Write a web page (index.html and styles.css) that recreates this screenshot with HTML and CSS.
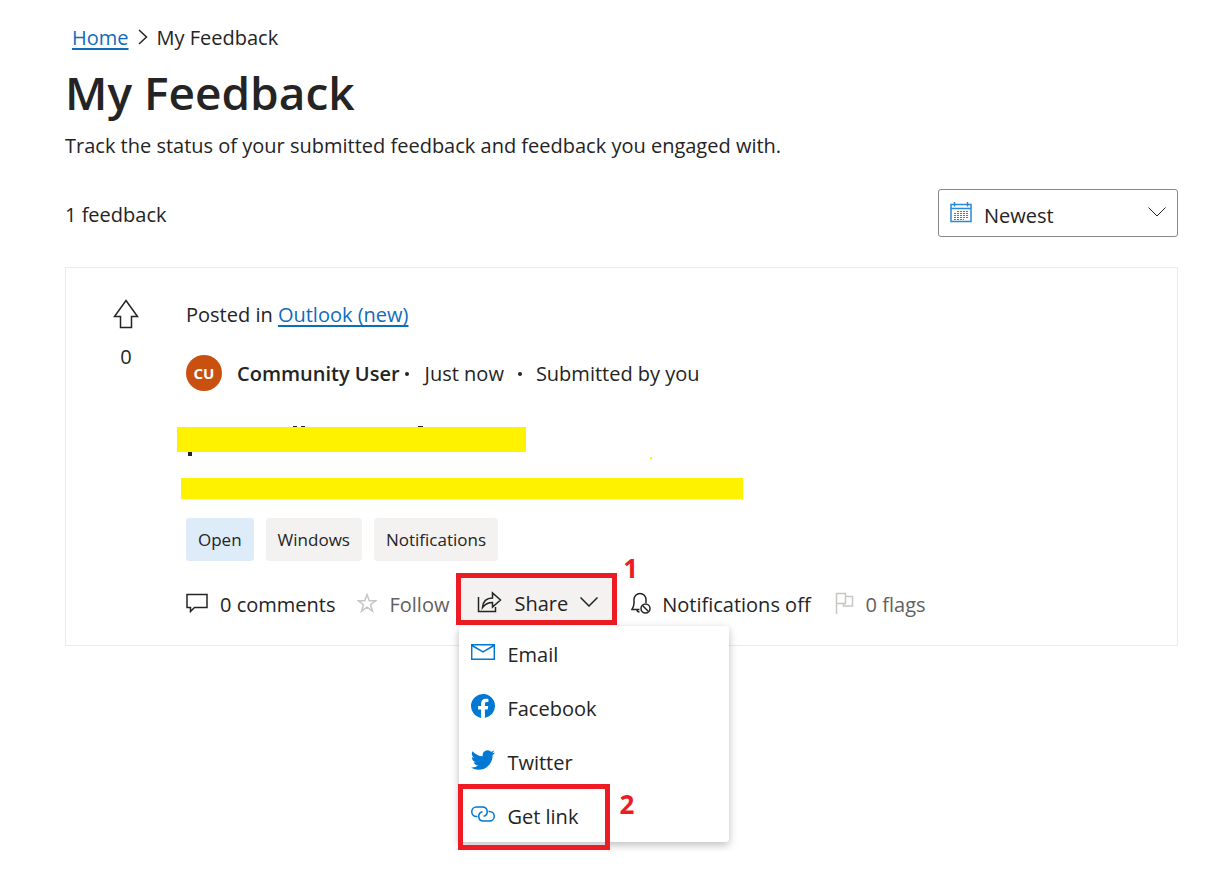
FILE: index.html
```
<!DOCTYPE html>
<html lang="en">
<head>
    <meta charset="UTF-8">
    <meta name="viewport" content="width=device-width, initial-scale=1.0">
    <title>My Feedback</title>
    <link rel="stylesheet" href="styles.css">
</head>
<body>

<main class="page">
    <nav class="breadcrumb" aria-label="Breadcrumb">
        <a href="#">Home</a>
        <svg width="10" height="16" viewBox="0 0 10 16"><path d="M1 1l7.500 7L1 15"/></svg>
        <span>My Feedback</span>
    </nav>

    <h1>My Feedback</h1>
    <p class="intro">Track the status of your submitted feedback and feedback you engaged with.</p>

    <div class="toolbar">
        <span class="count">1 feedback</span>
        <div class="sort">
            <svg class="sort-icon" width="22" height="21" viewBox="0 0 22 21">
                <path d="M1 2.500h20v17H1zM1 6.500h20M4.500 0v4.500M17.500 0v4.500"/>
                <path class="dots" d="M7 9.500h12M4 11.500h15M4 13.500h15M4 15.500h15M4 17.500h10"/>
            </svg>
            <select aria-label="Sort feedback">
                <option>Newest</option>
                <option>Oldest</option>
            </select>
            <svg class="sort-arrow" width="18" height="10" viewBox="0 0 18 10"><path d="M.500.500L9 9l8.500-8.500"/></svg>
        </div>
    </div>

    <article class="card">
        <div class="vote">
            <button class="vote-button" aria-label="Upvote">
                <svg width="26" height="30" viewBox="0 0 26 30"><path d="M13 1.500L24.500 17.500H18.500V28.500H7.500V17.500H1.500z"/></svg>
            </button>
            <span>0</span>
        </div>

        <div class="content">
            <p class="posted">Posted in <a href="#">Outlook (new)</a></p>

            <div class="author">
                <span class="avatar">CU</span>
                <strong>Community User</strong>
                <span class="dot near"></span>
                <span>Just now</span>
                <span class="dot"></span>
                <span>Submitted by you</span>
            </div>

            <!-- title and description are blanked out -->
            <svg class="redacted" width="566" height="76" viewBox="0 0 566 76">
                <path class="ink" d="M116 2h4v2h-4zM124 2h4v2h-4zM241 2h5v2h-5zM11 28h4v4h-4z"/>
                <path class="marker" d="M0 3h349v25H0zM4 54h562v21H4zM473 33h2v2h-2z"/>
            </svg>

            <div class="tags">
                <span class="tag open">Open</span>
                <span class="tag">Windows</span>
                <span class="tag">Notifications</span>
            </div>

            <div class="actions">
                <button class="action comments">
                    <svg width="22" height="20" viewBox="0 0 22 20"><path d="M1 1.500h20v13H8.500L4.500 18.500v-4H1z"/></svg>
                    0 comments
                </button>
                <button class="action muted follow">
                    <svg width="20" height="20" viewBox="0 0 20 20"><path d="M10 1.500l2.200 6.200h6.500l-5.200 4 2 6.500-5.500-4-5.500 4 2-6.500-5.200-4h6.500z"/></svg>
                    Follow
                </button>

                <div class="share">
                    <button class="action share-button" aria-expanded="true">
                        <svg width="25" height="22" viewBox="0 0 25 22">
                            <path d="M1.500 6v14.500h17V16M5.500 16.500C6 10 9.500 7 15.500 7V2l8 7-8 7v-4.500c-4.500 0-7.500 1.500-10 5z"/>
                        </svg>
                        Share
                        <svg width="18" height="10" viewBox="0 0 18 10"><path d="M.500.500L9 9l8.500-8.500"/></svg>
                    </button>
                    <span class="step step-one">1</span>

                    <div class="menu">
                        <a href="#">
                            <svg width="24" height="24" viewBox="0 0 24 24"><path d="M.700 4.700h22.600v14.600H.700zM1 5.500l11 6.500 11-6.500"/></svg>
                            Email
                        </a>
                        <a href="#">
                            <svg class="solid" width="24" height="24" viewBox="0 0 24 24">
                                <path d="M24 12a12 12 0 1 0-13.900 11.900v-8.400H7.100V12h3V9.400c0-3 1.800-4.700 4.600-4.700 1.300 0 2.700.200 2.700.200v3h-1.500c-1.500 0-2 .900-2 1.900V12h3.300l-.500 3.500h-2.800v8.400A12 12 0 0 0 24 12z"/>
                            </svg>
                            Facebook
                        </a>
                        <a href="#">
                            <svg class="solid" width="24" height="24" viewBox="0 0 24 24">
                                <path d="M23.950 4.570a10 10 0 0 1-2.820.770 4.960 4.960 0 0 0 2.160-2.720c-.950.550-2 .950-3.130 1.180a4.920 4.920 0 0 0-8.380 4.480C7.690 8.090 4.070 6.130 1.640 3.160a4.920 4.920 0 0 0 1.520 6.570 4.900 4.900 0 0 1-2.230-.610v.060a4.920 4.920 0 0 0 3.950 4.830 5 5 0 0 1-2.210.080 4.940 4.940 0 0 0 4.600 3.420A9.870 9.870 0 0 1 0 19.540a13.990 13.990 0 0 0 7.550 2.210c9.050 0 14-7.500 14-13.980 0-.210 0-.420-.020-.630a9.940 9.940 0 0 0 2.460-2.550z"/>
                            </svg>
                            Twitter
                        </a>
                        <a href="#" class="get-link">
                            <svg width="24" height="24" viewBox="0 0 24 24">
                                <path d="M6.500 14.500H5.500a4.700 4.700 0 0 1 0-9.500h6a4.700 4.700 0 0 1 1 9.300M17.500 9.500h1a4.700 4.700 0 0 1 0 9.500h-6a4.700 4.700 0 0 1-1-9.300"/>
                            </svg>
                            Get link
                        </a>
                        <span class="step step-two">2</span>
                    </div>
                </div>

                <button class="action bell">
                    <svg width="20" height="22" viewBox="0 0 20 22">
                        <path d="M8.500 17.500H1C2.500 15 3 14 3 11V7.500a6 6 0 0 1 12 0V11M6 17.500c0 1.500 1 2.500 2.500 2.500"/>
                        <circle cx="14.500" cy="16.500" r="4.500"/>
                        <path d="M11.500 13.500l6 6"/>
                    </svg>
                    Notifications off
                </button>
                <button class="action muted flags">
                    <svg width="19" height="22" viewBox="0 0 19 22"><path d="M1.500 22V1.500h9v10h-9M10.500 4.500h7v9.500h-9v-2.500"/></svg>
                    0 flags
                </button>
            </div>
        </div>
    </article>
</main>

</body>
</html>
```
FILE: styles.css
```
* {
    box-sizing: border-box;
}
body {
    margin: 0;
    background-color: #ffffff;
    color: #242424;
    font-family: "Open Sans", "Noto Sans", sans-serif;
    font-size: 20px;
    line-height: 28px;
}
button,
select {
    font: inherit;
    color: inherit;
}
a {
    color: #0f6cbd;
    text-underline-offset: 3px;
}
h1,
p {
    margin: 0;
}
svg {
    flex: none;
    fill: none;
    stroke: currentColor;
    stroke-width: 1.5;
}
.page {
    min-height: 100vh;
    padding: 24px 38px 0 65px;
}
.breadcrumb {
    display: flex;
    align-items: center;
    gap: 9px;
    padding-left: 7px;
}
.breadcrumb svg {
    margin-bottom: 3px;
}
h1 {
    margin-top: 8px;
    font-size: 46px;
    font-weight: 600;
    line-height: 64px;
}
.intro {
    margin-top: 8px;
}
.toolbar {
    display: flex;
    align-items: center;
    justify-content: space-between;
    margin: 29px 0 30px;
}
.count {
    padding-top: 3px;
}
.sort {
    position: relative;
    width: 240px;
    height: 48px;
}
.sort select {
    appearance: none;
    width: 100%;
    height: 100%;
    padding: 5px 40px 0 45px;
    border: 1px solid #8a8886;
    border-radius: 3px;
    background-color: #ffffff;
}
.sort svg {
    position: absolute;
    pointer-events: none;
}
.sort-icon {
    left: 12px;
    top: 13px;
    color: #2b88d8;
}
.sort-icon .dots {
    stroke-dasharray: 2 1;
    stroke-width: 1;
}
.sort-arrow {
    right: 12px;
    top: 18px;
    stroke-width: 1;
}
.card {
    display: flex;
    padding: 33px 0 19px;
    border: 1px solid #edebe9;
}
.vote {
    display: flex;
    flex-direction: column;
    align-items: center;
    gap: 14px;
    width: 120px;
    margin-top: -2px;
}
.vote-button {
    display: flex;
    padding: 0;
    border: none;
    background: none;
    cursor: pointer;
}
.author {
    display: flex;
    align-items: center;
    margin-top: 26px;
    line-height: 32px;
}
.author > :not(.avatar) {
    margin-top: 2px;
}
.avatar {
    width: 36px;
    height: 36px;
    margin-right: 15px;
    border-radius: 50%;
    background-color: #ca5010;
    color: #ffffff;
    font-size: 15px;
    font-weight: 700;
    line-height: 36px;
    text-align: center;
}
.author strong {
    font-weight: 600;
}
.dot {
    width: 4px;
    height: 4px;
    margin: 0 14px;
    border-radius: 50%;
    background-color: #242424;
}
.dot.near {
    margin-left: 5px;
    margin-right: 16px;
}
.redacted {
    display: block;
    margin: 33px 0 18px -9px;
    stroke: none;
}
.ink {
    fill: #242424;
}
.marker {
    fill: #fff200;
}
.tags {
    display: flex;
    gap: 12px;
}
.tag {
    padding: 0 12px;
    border-radius: 3px;
    background-color: #f3f2f1;
    font-size: 17px;
    line-height: 43px;
}
.tag.open {
    background-color: #deecf9;
}
.actions {
    display: flex;
    align-items: center;
    margin-top: 17px;
}
.action {
    display: flex;
    align-items: center;
    gap: 12px;
    height: 48px;
    padding: 5px 0 0;
    border: none;
    background: none;
    white-space: nowrap;
    cursor: pointer;
}
.action svg {
    margin-bottom: 4px;
}
.muted {
    color: #616161;
}
.muted svg {
    color: #c8c6c4;
}
.follow {
    margin-left: 22px;
}
.share {
    position: relative;
    margin: 0 14px 0 7px;
}
.share-button {
    height: 52px;
    margin: -5px 0 1px;
    padding: 10px 14px 0 16px;
    border: 5px solid #ed1c24;
    background-color: #f3f2f1;
}
.bell {
    gap: 11px;
}
.flags {
    margin-left: 24px;
}
.menu {
    position: absolute;
    left: 3px;
    top: 100%;
    width: 270px;
    border-radius: 3px;
    background-color: #ffffff;
    box-shadow: 0 3px 8px rgba(0, 0, 0, 0.26);
}
.menu a {
    display: flex;
    align-items: center;
    gap: 12px;
    height: 54px;
    padding: 4px 12px 0;
    color: #242424;
    text-decoration: none;
}
.menu svg {
    margin-bottom: 6px;
    color: #0078d4;
}
.menu .solid {
    fill: currentColor;
    stroke: none;
}
.menu .get-link {
    width: 152px;
    height: 66px;
    margin: -4px 0 -8px -1px;
    padding: 0 8px;
    border: 5px solid #ed1c24;
}
/* numbered callouts beside the highlighted steps */
.step {
    position: absolute;
    color: #ed1c24;
    font-size: 26px;
    font-weight: 700;
}
.step-one {
    left: 100%;
    top: -24px;
    margin-left: 6px;
}
.step-two {
    left: 160px;
    bottom: 24px;
}
```
